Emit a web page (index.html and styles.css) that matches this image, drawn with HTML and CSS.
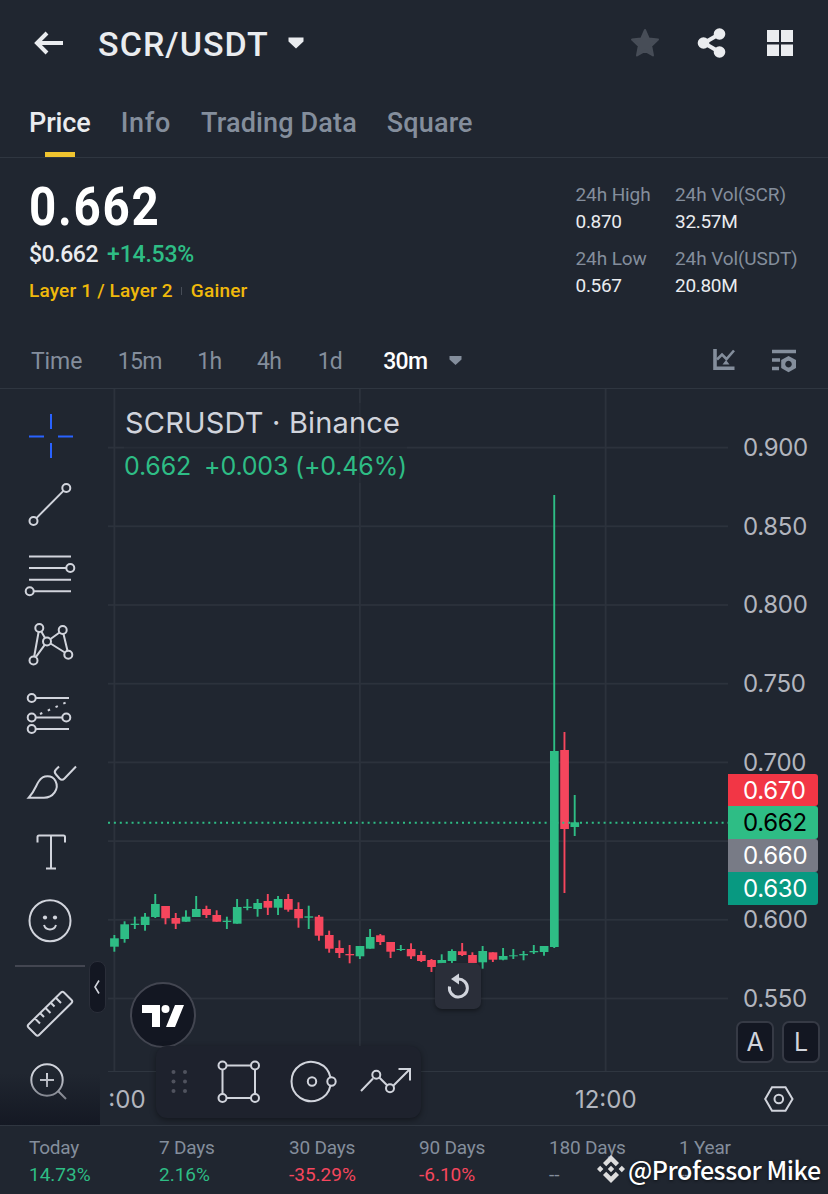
FILE: index.html
```html
<!DOCTYPE html>
<html lang="en">

<head>
    <meta charset="UTF-8">
    <meta name="viewport" content="width=device-width, initial-scale=1.0">
    <title>SCR/USDT</title>
    <link rel="stylesheet" href="styles.css">
</head>

<body>

    <!-- Title bar -->
    <header class="topbar">
        <svg class="back" width="30" height="24" viewBox="0 0 30 24"><path d="M29 12H4M13 2L3 12l10 10" fill="none" stroke="#eaecef" stroke-width="4"/></svg>
        <h1 class="pair">SCR/USDT</h1>
        <svg class="pair-caret" width="16" height="12" viewBox="0 0 16 12"><path d="M.5.5h15v4L8 11.500.5 4.500z" fill="#eaecef"/></svg>
        <div class="top-actions">
            <svg width="30" height="30" viewBox="0 0 30 30"><path d="M15 2l3.800 8.600 9.200 1-6.800 6.300 1.800 9.600-8-4.700-8 4.700 1.800-9.600L2 11.600l9.200-1z" fill="#474d57" stroke="#474d57" stroke-width="2" stroke-linejoin="round"/></svg>
            <svg width="30" height="30" viewBox="0 0 30 30"><path d="M22.500 6L7 15l15.500 9" fill="none" stroke="#eaecef" stroke-width="4"/><circle cx="22.500" cy="6" r="5.800" fill="#eaecef"/><circle cx="6.500" cy="15" r="5.800" fill="#eaecef"/><circle cx="22.500" cy="24" r="5.800" fill="#eaecef"/></svg>
            <svg width="26" height="26" viewBox="0 0 26 26"><path d="M0 0h12v12H0zM14 0h12v12H14zM0 14.500h12v11.500H0zM14 14.500h12v11.500H14z" fill="#eaecef"/></svg>
        </div>
    </header>

    <nav class="tabs">
        <a class="tab active">Price</a>
        <a class="tab tab-info">Info</a>
        <a class="tab">Trading Data</a>
        <a class="tab">Square</a>
    </nav>

    <!-- Price summary -->
    <section class="ticker">
        <div class="ticker-main">
            <div class="last-price">0.662</div>
            <div class="sub-price"><span class="fiat">$0.662</span><span class="up">+14.53%</span></div>
            <div class="tags"><span>Layer 1 / Layer 2</span><i></i><span>Gainer</span></div>
        </div>
        <dl class="day-stats">
            <div><dt>24h High</dt><dd>0.870</dd></div>
            <div><dt>24h Vol(SCR)</dt><dd>32.57M</dd></div>
            <div><dt>24h Low</dt><dd>0.567</dd></div>
            <div><dt>24h Vol(USDT)</dt><dd>20.80M</dd></div>
        </dl>
    </section>

    <!-- Intervals -->
    <div class="intervals">
        <span class="iv iv-time">Time</span>
        <span class="iv">15m</span>
        <span class="iv">1h</span>
        <span class="iv iv-4h">4h</span>
        <span class="iv iv-1d">1d</span>
        <span class="iv active">30m</span>
        <svg class="iv-caret" width="13" height="9" viewBox="0 0 13 9"><path d="M.5 0h12v3.500L6.500 9l-6-5.500z" fill="#848e9c"/></svg>
        <svg class="iv-chart" width="22" height="22" viewBox="0 0 22 22"><path d="M2 0v19.300h19.500" fill="none" stroke="#848e9c" stroke-width="3.600"/><path d="M4 10.500l5-5 4.500 4.500 7.500-8.500" fill="none" stroke="#848e9c" stroke-width="2.600"/><path d="M13 11l3.500 4.500h-7z" fill="#848e9c"/></svg>
        <svg class="iv-settings" width="25" height="24" viewBox="0 0 25 24"><path d="M0 2.500h24M0 11h8M0 19.500h7" stroke="#848e9c" stroke-width="3.600"/><path fill-rule="evenodd" d="M16.500 7l7.500 4v8l-7.500 4.300L9.200 19v-8zM16.500 11.800a3.300 3.300 0 1 0 .01 0z" fill="#848e9c"/></svg>
    </div>

    <!-- Chart -->
    <main class="chart">
        <aside class="tools">
            <svg class="tool tool-active" viewBox="0 0 60 60"><path d="M31 8v15M31 37v15M9 30.500h15M38 30.500h15"/></svg>
            <svg class="tool" viewBox="0 0 60 60"><circle cx="46.300" cy="13" r="4"/><circle cx="13.500" cy="46" r="4"/><path d="M43.400 15.900L16.400 43.100"/></svg>
            <svg class="tool" viewBox="0 0 60 60"><path d="M9 11.500h42M9 23h37M9 34.700h42M14 46.300h37"/><circle cx="50.300" cy="23" r="4"/><circle cx="9.700" cy="46.300" r="4"/></svg>
            <svg class="tool" viewBox="0 0 60 60"><circle cx="19.300" cy="14" r="4"/><circle cx="42.700" cy="16" r="4"/><circle cx="27" cy="27.500" r="4"/><circle cx="13.500" cy="46.500" r="4"/><circle cx="48.300" cy="40.800" r="4"/><path d="M18.600 18l-4.400 24.500M21.300 17.500l3.700 6.500M30.500 25l9-6.500M24.700 30.800L15.800 43.200M30.500 29.500l14.400 9M43.500 20l4 16.800"/></svg>
            <svg class="tool" viewBox="0 0 60 60"><circle cx="11.700" cy="15" r="4"/><circle cx="11.700" cy="34.500" r="4"/><circle cx="46.300" cy="34.500" r="4"/><circle cx="11.700" cy="46" r="4"/><path d="M15.700 15H49M15.700 34.500h26.600M15.700 46H49"/><path d="M20 31l27-12" stroke-dasharray="2.500 6"/></svg>
            <svg class="tool" viewBox="0 0 60 60"><path d="M8.700 45.700C15 39 16 33 19 29c4-6 13-6.500 16.500 0 4 8-2.500 16.700-11.500 16.700zM39 14.500L36 17.500q-2.500 2.500 0 5l3.500 4q2.500 2.500 5 0L56 14.500"/></svg>
            <svg class="tool" viewBox="0 0 60 60"><path d="M17.500 20.500v-5.500q0-1.500 1.500-1.500h24.500q1.500 0 1.500 1.500v5.500M31 13.500v33M26 46.500h10"/></svg>
            <svg class="tool" viewBox="0 0 60 60"><circle cx="30" cy="29.700" r="20.500"/><g fill="currentColor" stroke="none"><circle cx="25" cy="26.500" r="2.100"/><circle cx="35" cy="26.500" r="2.100"/></g><path d="M24 34q1.500 4.500 6 4.500t6-4.500"/></svg>
            <hr>
            <svg class="tool" viewBox="0 0 60 60"><path d="M41 9.500q1.500-1.500 3 0l7.500 7.500q1.500 1.500 0 3L19 52q-1.500 1.500-3 0l-7.500-7.500q-1.500-1.500 0-3zM36 15l5 5M31 20l3.500 3.500M25.500 25l5 5M20.500 30.500l3.500 3.500M15 35.500l5 5"/></svg>
            <svg class="tool" viewBox="0 0 60 60"><circle cx="27" cy="28" r="15.700"/><path d="M20 28h14M27 21v14M38.500 39.500L46 47"/></svg>
            <div class="tools-fade"></div>
            <div class="tools-toggle"><svg width="8" height="16" viewBox="0 0 8 16"><path d="M6 1.500L2 8l4 6.500" fill="none" stroke="#d1d4dc" stroke-width="1.600"/></svg></div>
        </aside>

        <div class="board">
            <div class="plot-row">
                <div class="plot">
                    <svg id="plot" width="620" height="682" viewBox="108 389 620 682"></svg>
                    <div class="legend">
                        <div class="legend-name">SCRUSDT · Binance</div>
                        <div class="legend-values"><span>0.662</span><span>+0.003 (+0.46%)</span></div>
                    </div>
                    <div class="tv-logo"><svg width="42" height="22" viewBox="0 0 42 22"><path d="M0 0h18v22h-8V8H0zM33 0h9l-9 22h-9z" fill="#fff"/><circle cx="23.500" cy="4" r="4" fill="#fff"/></svg></div>
                    <div class="reset"><svg width="24" height="26" viewBox="0 0 24 26"><path d="M3.500 13.500A9 9 0 1 0 12 6" fill="none" stroke="#d1d4dc" stroke-width="3"/><path d="M13 .5v11L5 6z" fill="#d1d4dc"/></svg></div>
                </div>
                <div class="price-axis">
                    <span>0.900</span><span>0.850</span><span>0.800</span><span>0.750</span><span>0.700</span><span></span><span>0.600</span><span>0.550</span>
                    <div class="price-tags">
                        <b class="tag-ask">0.670</b>
                        <b class="tag-last">0.662</b>
                        <b class="tag-prev">0.660</b>
                        <b class="tag-bid">0.630</b>
                    </div>
                    <div class="scale-btns"><button>A</button><button>L</button></div>
                </div>
            </div>
            <div class="time-axis">
                <div class="times"><span>12:00</span><span></span><span>12:00</span></div>
                <svg width="30" height="26" viewBox="0 0 30 26"><path d="M8 1.200h13.500L28.500 13l-7 11.800H8L1.200 13z" fill="none" stroke="#d1d4dc" stroke-width="2"/><circle cx="14.800" cy="13" r="4.300" fill="none" stroke="#d1d4dc" stroke-width="2"/></svg>
            </div>
            <div class="shapes">
                <svg width="265" height="72" viewBox="0 0 265 72">
                    <g fill="#50535e"><circle cx="17.500" cy="26" r="2"/><circle cx="29" cy="26" r="2"/><circle cx="17.500" cy="35.500" r="2"/><circle cx="29" cy="35.500" r="2"/><circle cx="17.500" cy="45" r="2"/><circle cx="29" cy="45" r="2"/></g>
                    <g fill="none" stroke="#d1d4dc" stroke-width="2">
                        <circle cx="66.500" cy="19.500" r="4"/><circle cx="99" cy="19.500" r="4"/><circle cx="66.500" cy="52" r="4"/><circle cx="99" cy="52" r="4"/>
                        <path d="M70.500 19.500H95M70.500 52H95M66.500 23.500V48M99 23.500V48"/>
                        <path d="M174.500 31.500A19.700 19.700 0 1 0 174.500 39.500"/><circle cx="156" cy="35.500" r="4.200"/><circle cx="175.500" cy="35.500" r="4.200"/>
                        <path d="M205 45l12-12.500M223.300 31.500l8 8M237 40l17-17M242.500 23H254v11.500"/><circle cx="220.300" cy="28.800" r="4"/><circle cx="234" cy="42.300" r="4"/>
                    </g>
                </svg>
            </div>
        </div>
    </main>

    <!-- Performance -->
    <footer class="performance">
        <div><span>Today</span><b class="up">14.73%</b></div>
        <div><span>7 Days</span><b class="up">2.16%</b></div>
        <div><span>30 Days</span><b class="down">-35.29%</b></div>
        <div><span>90 Days</span><b class="down">-6.10%</b></div>
        <div><span>180 Days</span><b>--</b></div>
        <div><span>1 Year</span><b>--</b></div>
        <div class="watermark">
            <svg width="28" height="28" viewBox="0 0 28 28"><path d="M14 0l8 8-3.200 3.200L14 6.400l-4.800 4.800L6 8zM14 28l-8-8 3.200-3.200 4.800 4.800 4.800-4.800L22 20zM3.200 10.800L6.400 14l-3.200 3.200L0 14zM24.800 10.800L28 14l-3.200 3.200-3.200-3.200zM14 10.800l3.200 3.200-3.200 3.200-3.200-3.200z" fill="#ddd"/></svg>
            <span>@Professor Mike</span>
        </div>
    </footer>

    <script>
        // [up, body top, body bottom, high, low], measured down from y = 880
        const candles = [
            [1, 58.3, 66.7, 55, 71.7], [1, 44.3, 59, 41.3, 62.7], [1, 43.7, 45, 36.7, 49], [1, 36.7, 45, 33, 50.7],
            [1, 24, 37, 14, 38], [0, 26, 38.3, 26, 44.3], [0, 38, 43.7, 33, 49], [1, 36.7, 41.7, 30.3, 41.7],
            [1, 29, 37, 16, 37], [0, 29, 35, 25.7, 38], [0, 35, 41.7, 30.3, 41.7], [1, 40.7, 42, 36.7, 49],
            [1, 27, 43.7, 19, 43.7], [1, 26.7, 28, 19, 30.3], [1, 23, 29, 19, 36.7], [0, 21, 27.7, 14, 35],
            [1, 19, 27.7, 16, 35], [0, 19, 29.7, 14, 31.7], [0, 29, 38.3, 22.3, 47.7], [1, 36.3, 37.7, 25.7, 49],
            [0, 36.7, 55.7, 35, 60.7], [0, 55, 68.7, 50.7, 72.7], [0, 68, 73, 60.3, 78], [0, 74, 75.3, 65, 83.3],
            [1, 66, 76.3, 66, 79], [1, 57, 68.7, 49, 68.7], [0, 55.3, 62, 54, 65], [0, 62, 71.7, 62, 78],
            [1, 69, 70, 65, 71], [0, 69, 76.3, 63.3, 79], [0, 75, 81, 71, 82], [0, 80, 87, 79, 92],
            [1, 80, 83.3, 74.3, 85], [1, 71, 81, 69.3, 83], [0, 71.3, 75, 63, 76], [0, 75, 83, 72.3, 83],
            [1, 71, 82.3, 66, 88.7], [0, 72.3, 79.7, 72.3, 82], [1, 76, 79.7, 68, 80.3], [1, 75.3, 76.3, 69, 79],
            [1, 74, 75.3, 71, 80.3], [1, 71, 72.3, 65, 74], [1, 66, 72, 66, 75.7], [1, -129, 67, -385, 68],
            [0, -130, -51, -148, 13], [1, -57.7, -53, -85, -44]
        ];

        let out = '';
        for (let i = 0; i < 8; i++) {
            out += `<rect class="grid" x="108" y="${446.7 + i * 78.7}" width="620" height="1.8"/>`;
        }
        for (const x of [113.5, 359, 604.7]) {
            out += `<rect class="grid" x="${x}" y="389" width="1.8" height="682"/>`;
        }
        candles.forEach(([up, top, bottom, high, low], i) => {
            const x = 114.4 + i * 10.23;
            out += `<g class="${up ? 'candle-up' : 'candle-down'}">
                <rect x="${x - 1}" y="${880 + high}" width="1.9" height="${low - high}"/>
                <rect x="${x - 4.3}" y="${880 + top}" width="8.7" height="${bottom - top}"/></g>`;
        });
        out += '<line class="last-line" x1="108" y1="822.7" x2="728" y2="822.7"/>';
        document.getElementById('plot').innerHTML = out;
    </script>

</body>

</html>
```
FILE: styles.css
```css
* {
    box-sizing: border-box;
}

body {
    margin: 0;
    width: 828px;
    height: 1194px;
    overflow: hidden;
    display: flex;
    flex-direction: column;
    background: #202630;
    color: #eaecef;
    font-family: Roboto, "Noto Sans", sans-serif;
}

svg {
    display: block;
    flex: none;
}

.up {
    color: #2ebd85;
}

.down {
    color: #f6465d;
}

/* Title bar */
.topbar {
    display: flex;
    align-items: center;
    height: 85px;
    padding: 0 35px 0 34px;
}

.pair {
    margin: 2px 0 0 34px;
    font-size: 34px;
    font-weight: 500;
    line-height: 40px;
    letter-spacing: 1.050px;
    white-space: nowrap;
}

.pair-caret {
    margin-left: 19px;
}

.top-actions {
    display: flex;
    align-items: center;
    gap: 37px;
    margin-left: auto;
}

.top-actions svg:last-child {
    margin-left: 3px;
}

.tabs {
    display: flex;
    gap: 30px;
    height: 73px;
    padding: 21px 0 0 29px;
    border-bottom: 1px solid #2f3640;
}

.tab {
    display: flex;
    flex-direction: column;
    align-items: center;
    color: #848e9c;
    font-size: 27px;
    font-weight: 500;
    line-height: 34px;
    letter-spacing: .150px;
}

.tab-info {
    letter-spacing: .700px;
}

.tab.active {
    color: #eaecef;
    letter-spacing: -.100px;
}

.tab.active::after {
    content: "";
    width: 30px;
    height: 5px;
    margin-top: 12px;
    background: #f0c42f;
}

/* Price summary */
.ticker {
    display: flex;
    justify-content: space-between;
    height: 177px;
    padding: 0 29px;
    white-space: nowrap;
}

.last-price {
    width: 140px;
    padding-top: 18px;
    color: #fff;
    font-size: 54px;
    font-weight: 700;
    line-height: 62px;
    letter-spacing: 2px;
    transform: scaleX(.880);
    transform-origin: 0 0;
}

.sub-price {
    display: flex;
    gap: 9px;
    margin-top: 2px;
    font-size: 23px;
    font-weight: 500;
    line-height: 30px;
    letter-spacing: -.200px;
}

.sub-price .fiat {
    letter-spacing: -.450px;
}

.tags {
    display: flex;
    align-items: center;
    margin-top: 8px;
    color: #f0b90b;
    font-size: 19px;
    font-weight: 500;
    line-height: 26px;
    letter-spacing: .180px;
}

.tags i {
    width: 1px;
    height: 8px;
    margin: 0 9px 0 8px;
    background: #474d57;
}

.day-stats {
    display: grid;
    grid-template-columns: 99.500px 124px;
    grid-auto-rows: 63.500px;
    margin: 0;
    padding-top: 23px;
    font-size: 19px;
    line-height: 27px;
    letter-spacing: -.100px;
}

.day-stats dt {
    color: #848e9c;
}

.day-stats dd {
    margin: 0;
    letter-spacing: -.300px;
}

/* Intervals */
.intervals {
    display: flex;
    align-items: center;
    height: 54px;
    padding: 0 31px 0 31px;
    border-bottom: 1px solid #2f3640;
    color: #848e9c;
    font-size: 23px;
    letter-spacing: -.700px;
}

.intervals .active {
    color: #fff;
    font-weight: 500;
}

.iv {
    margin-right: 35.500px;
}

.iv-time {
    letter-spacing: -.100px;
}

.iv-4h {
    margin-right: 36.500px;
}

.iv-1d {
    margin-right: 41px;
}

.intervals .active {
    margin-right: 0;
}

.iv-caret {
    margin: 0 0 2px 22px;
}

.iv-chart {
    margin: 0 0 3px auto;
}

.iv-settings {
    margin: 0 0 1px 37px;
}

/* Chart */
.chart {
    display: flex;
    height: 736px;
    font-family: Inter, sans-serif;
}

.tools {
    position: relative;
    width: 108px;
    padding-top: 12.500px;
}

.tool {
    width: 60px;
    height: 60px;
    margin: 4.500px 0 9.300px 20px;
    color: #d1d4dc;
    fill: none;
    stroke: currentColor;
    stroke-width: 2;
}

.tool-active {
    color: #2962ff;
}

.tools hr {
    width: 70px;
    height: 2px;
    margin: 13.500px 0 16px 15px;
    border: 0;
    background: #434651;
}

.tools-fade {
    position: absolute;
    left: 0;
    bottom: 0;
    width: 100px;
    height: 52px;
    background: linear-gradient(rgba(19, 23, 34, 0), rgba(19, 23, 34, .9));
}

.tools-toggle {
    position: absolute;
    left: 89px;
    top: 572px;
    width: 17px;
    height: 52px;
    padding: 17px 0 0 3px;
    border: 1px solid #2a2e39;
    border-radius: 8px;
    background: #131722;
}

.board {
    position: relative;
    flex: 1;
}

.plot-row {
    display: flex;
    height: 683px;
    border-bottom: 1px solid #2f3640;
}

.plot {
    position: relative;
    width: 620px;
}

.grid {
    fill: #2c323c;
}

.candle-up {
    fill: #2ebd85;
}

.candle-down {
    fill: #f6465d;
}

.last-line {
    stroke: #2ebd85;
    stroke-width: 2;
    stroke-dasharray: 2 3.900;
}

.legend {
    position: absolute;
    left: 16px;
    top: 14px;
    background: rgba(32, 38, 48, .5);
    white-space: nowrap;
}

.legend-name {
    color: #d1d4dc;
    padding-left: 1px;
    font-size: 29px;
    line-height: 39px;
    letter-spacing: .180px;
}

.legend-values {
    display: flex;
    gap: 13px;
    margin-top: 7px;
    color: #2ebd85;
    font-size: 25px;
    line-height: 34px;
    letter-spacing: -.180px;
}

.tv-logo {
    position: absolute;
    left: 22px;
    top: 593px;
    width: 66px;
    height: 66px;
    padding: 21px 0 0 10px;
    border: 2px solid #434651;
    border-radius: 50%;
    background: #131722;
}

.reset {
    position: absolute;
    left: 327px;
    top: 574px;
    width: 46px;
    height: 46px;
    padding: 10px 0 0 11px;
    border-radius: 7px;
    background: #2a2e39;
    box-shadow: 0 2px 4px rgba(0, 0, 0, .4);
}

.price-axis {
    position: relative;
    display: flex;
    flex-direction: column;
    width: 100px;
    padding: 20px 0 0 15px;
    color: #b2b5be;
    font-size: 24px;
    letter-spacing: -.300px;
}

.price-axis span {
    height: 78.700px;
    line-height: 78.700px;
}

.price-tags {
    position: absolute;
    left: 0;
    top: 384.500px;
    width: 90px;
}

.price-tags b {
    display: block;
    height: 32.800px;
    padding-left: 15px;
    border-radius: 0 3px 3px 0;
    color: #fff;
    font-weight: 400;
    line-height: 33px;
}

.price-tags .tag-ask {
    background: #f23645;
}

.price-tags .tag-last {
    background: #2ebd85;
    color: #000;
}

.price-tags .tag-prev {
    background: #787b86;
}

.price-tags .tag-bid {
    background: #089981;
}

.scale-btns {
    position: absolute;
    left: 8px;
    top: 632px;
    display: flex;
    gap: 8px;
}

.scale-btns button {
    width: 38px;
    height: 42px;
    padding: 0;
    border: 2px solid #363a45;
    border-radius: 7px;
    background: #131722;
    color: #d1d4dc;
    font: 25px Inter, sans-serif;
}

.time-axis {
    display: flex;
    align-items: center;
    height: 53px;
    padding-top: 1px;
    color: #b2b5be;
    font-size: 24px;
}

.times {
    display: flex;
    width: 656px;
    overflow: hidden;
}

.times span {
    flex: none;
    width: 245.500px;
    margin-left: -116px;
    margin-right: 116px;
    text-align: center;
}

/* Floating shape toolbar */
.shapes {
    position: absolute;
    left: 48px;
    top: 657px;
    border-radius: 11px;
    background: #1e222d;
    box-shadow: 0 2px 6px rgba(0, 0, 0, .4);
}

/* Performance */
.performance {
    position: relative;
    display: grid;
    grid-template-columns: repeat(6, 130px);
    height: 69px;
    padding: 8px 0 0 29px;
    border-top: 1px solid #2f3640;
    color: #848e9c;
    font-size: 19px;
    line-height: 27px;
    letter-spacing: -.200px;
    white-space: nowrap;
}

.performance b {
    display: block;
    font-weight: 400;
    letter-spacing: 0;
}

.watermark {
    position: absolute;
    left: 597px;
    top: 25px;
    display: flex;
    align-items: center;
    gap: 3px;
    color: #fff;
    font: 500 25px/36px "Noto Sans CJK SC", sans-serif;
    letter-spacing: -.450px;
    text-shadow: 0 1px 3px rgba(0, 0, 0, .6);
}
```
